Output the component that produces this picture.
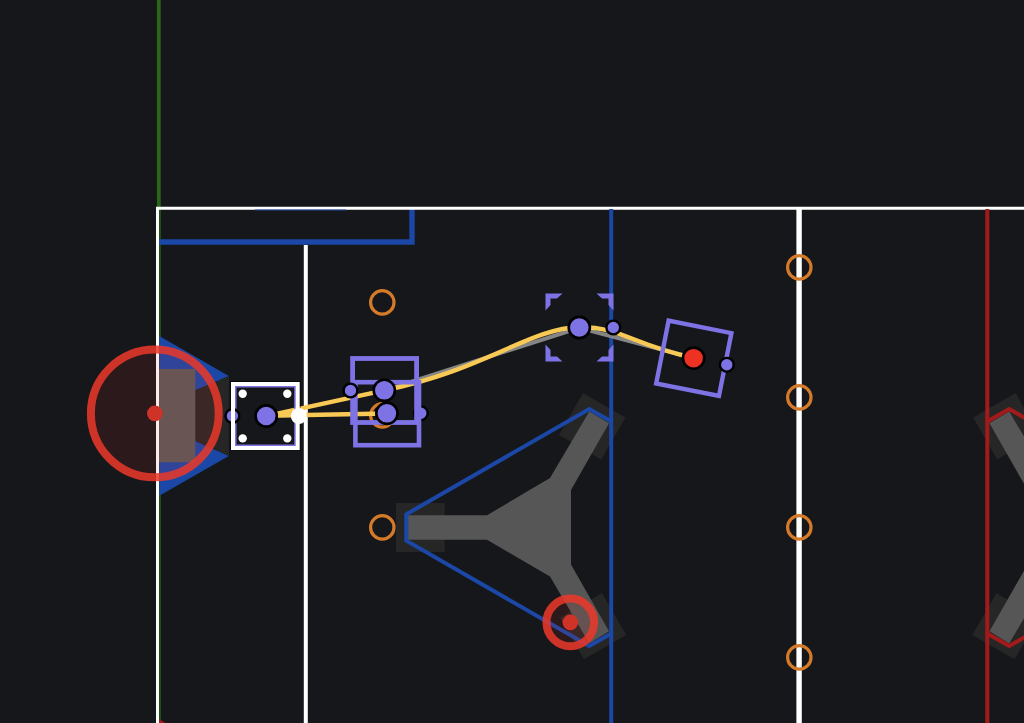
import React from "react";

const BLUE = "#1b48a6";
const RED = "#a31a1b";
const PURPLE = "#7e73e4";

const NOTES = [
  [382, 302],
  [382, 415],
  [382, 527],
  [799, 267],
  [799, 397],
  [799, 527],
  [799, 657],
];

interface StageProps {
  color: string;
  transform?: string;
}

// Three-legged truss with its feet and the taped outline
const Stage: React.FC<StageProps> = ({ color, transform }) => (
  <g transform={transform}>
    <g fill="#262626">
      <path d="M396 503H444.7V552H396Z" />
      <path d="M583 393L625.4 417.4L601.3 459.4L559 435Z" />
      <path d="M584 659.3L626.3 635L602 593.3L560 617.7Z" />
    </g>
    <path
      fill="#565656"
      d="M408 515.3H487L550 478L589.3 411.5L609 423.3L571 490V564.5L609 631.3L589.3 643.5L550 576.5L487 539.7H408Z"
    />
    <path
      fill="none"
      stroke={color}
      strokeWidth={4}
      d="M611.3 421.5L589.3 409L406.3 514.3V540.7L589.3 646L611.3 633.5"
    />
    <path d="M611.2 209V4000" stroke={color} strokeWidth={4} />
  </g>
);

interface CircleProps {
  x: number;
  y: number;
  r: number;
}

// Keep-out circle drawn as a translucent disc, a ring and a centre dot
const Obstacle: React.FC<CircleProps> = ({ x, y, r }) => (
  <g>
    <circle cx={x} cy={y} r={r} fill="#f03224" fillOpacity={0.1} />
    <circle cx={x} cy={y} r={r - 4} fill="none" stroke="#ea3829" strokeOpacity={0.85} strokeWidth={8} />
    <circle cx={x} cy={y} r={7.8} fill="#cf3328" />
  </g>
);

const Handle: React.FC<{ x: number; y: number }> = ({ x, y }) => (
  <circle cx={x} cy={y} r={6.9} fill={PURPLE} stroke="black" strokeWidth={2.4} />
);

const Point: React.FC<{ x: number; y: number; fill?: string }> = ({ x, y, fill = PURPLE }) => (
  <circle cx={x} cy={y} r={10.6} fill={fill} stroke="black" strokeWidth={2.6} />
);

const Field = () => (
  <g>
    <path d="M158.8 0V4000" stroke="#2c661a" strokeWidth={3.8} />
    <path d="M160 210V4000" stroke="#1e4f14" strokeWidth={2} />

    {/* Amp zone and start line */}
    <path d="M159 242H412V209" fill="none" stroke={BLUE} strokeWidth={5.4} />
    <path d="M305.8 245V4000" stroke="white" strokeWidth={4} />

    {/* Speaker and subwoofer */}
    <path d="M195 390L228.8 376V456L195 441Z" fill="#262626" />
    <path d="M159.3 336L228.8 376L195 390.3V441L228.8 456L159.3 495.7Z" fill={BLUE} />
    <path d="M159 369H195.3V462.3H159Z" fill="#5a5a5a" />
    <path d="M159 719L167 724H159Z" fill={RED} />

    <path d="M799.1 209V4000" stroke="white" strokeWidth={5.4} />
    <path d="M157.5 4000V208.3H4000" fill="none" stroke="white" strokeWidth={3} />
    <path d="M255 210H346" stroke={BLUE} strokeWidth={1} />

    <Stage color={BLUE} />
    <Stage color={RED} transform="translate(1598.5 0) scale(-1 1)" />

    {NOTES.map(([x, y]) => (
      <circle key={`${x}-${y}`} cx={x + 0.3} cy={y + 0.4} r={11.7} fill="none" stroke="#d47a29" strokeWidth={3.2} />
    ))}
  </g>
);

const Trajectory = () => (
  <g fill="none">
    <path d="M384.3 390.3L579.3 327.8L693.6 358" stroke="#858585" strokeWidth={4} />
    <path
      d="M386.7 413.5L267 415.8L384.3 390.3C485 370 530 328 579.3 327.3C622 327 630 344 693.6 358"
      stroke="#f8c954"
      strokeWidth={4.4}
      strokeLinejoin="round"
    />
  </g>
);

// A waypoint without a heading shows only the corners of its bumper
const CORNER = "M-34 -34H-17L-22.5 -29H-29V-22.5L-34 -17Z";

const Waypoints = () => (
  <g>
    <Handle x={420.8} y={413.3} />
    <rect x={355.4} y={382.2} width={63.6} height={63} fill="none" stroke={PURPLE} strokeWidth={4.6} />
    <rect x={352.6} y={358.5} width={64} height={64} fill="none" stroke={PURPLE} strokeWidth={4.8} />
    <Handle x={350.5} y={390.5} />
    <Point x={384.3} y={390.3} />
    <Point x={386.9} y={413.3} />

    <g transform="translate(579.5 327.5)" fill={PURPLE}>
      <path d={CORNER} />
      <path d={CORNER} transform="scale(-1 1)" />
      <path d={CORNER} transform="scale(1 -1)" />
      <path d={CORNER} transform="scale(-1 -1)" />
    </g>
    <Point x={579.3} y={327.5} />
    <Handle x={613.3} y={327.5} />

    <rect
      x={661.8}
      y={326.3}
      width={64}
      height={64}
      fill="none"
      stroke={PURPLE}
      strokeWidth={4.4}
      transform="rotate(11.2 693.8 358.3)"
    />
    <Handle x={726.8} y={364.8} />
    <Point x={693.6} y={358.2} fill="#ed3224" />
  </g>
);

const Robot = () => (
  <g>
    <rect x={230.5} y={381.5} width={69.5} height={68.5} fill="none" stroke="black" strokeOpacity={0.6} />
    <rect x={235} y={386} width={60.7} height={60} fill="none" stroke={PURPLE} strokeWidth={3} />
    <Handle x={232.4} y={416} />
    <rect x={233} y={384} width={64.7} height={64} fill="none" stroke="white" strokeWidth={4} />
    <g fill="white">
      <circle cx={242.7} cy={393.7} r={4.2} />
      <circle cx={287.3} cy={393.7} r={4.2} />
      <circle cx={242.7} cy={438.4} r={4.2} />
      <circle cx={287.3} cy={438.4} r={4.2} />
    </g>
    <Point x={266.2} y={416} />
    <circle cx={298.8} cy={416} r={8} fill="white" />
  </g>
);

export default function App() {
  return (
    <main className="h-screen w-full overflow-hidden bg-[#16171a]">
      <svg className="block h-full w-full" role="img" aria-label="Field with robot path">
        <Field />
        <Obstacle x={154.8} y={413.4} r={67.9} />
        <Obstacle x={570.3} y={622.4} r={27.8} />
        <Trajectory />
        <Waypoints />
        <Robot />
      </svg>
    </main>
  );
}
